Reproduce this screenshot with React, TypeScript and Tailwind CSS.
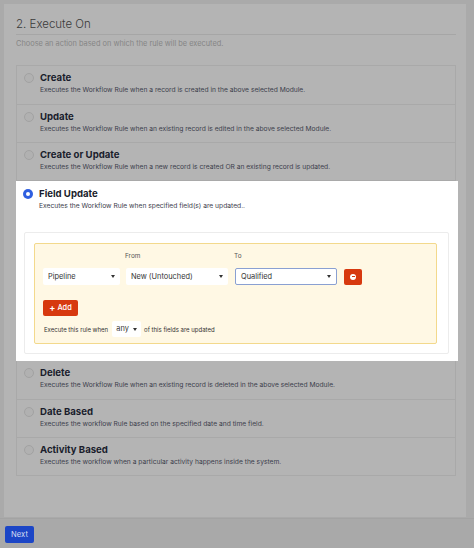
import React from 'react';

const font = { fontFamily: 'Inter, "Noto Sans", sans-serif' };

interface Option {
  title: string;
  desc: string;
}

const before: Option[] = [
  { title: 'Create', desc: 'Executes the Workflow Rule when a record is created in the above selected Module.' },
  { title: 'Update', desc: 'Executes the Workflow Rule when an existing record is edited in the above selected Module.' },
  { title: 'Create or Update', desc: 'Executes the Workflow Rule when a new record is created OR an existing record is updated.' },
];

const after: Option[] = [
  { title: 'Delete', desc: 'Executes the Workflow Rule when an existing record is deleted in the above selected Module.' },
  { title: 'Date Based', desc: 'Executes the workflow Rule based on the specified date and time field.' },
  { title: 'Activity Based', desc: 'Executes the workflow when a particular activity happens inside the system.' },
];

const Caret = () => (
  <span className="inline-block w-0 h-0 border-l-[2.5px] border-r-[2.5px] border-t-[3px] border-l-transparent border-r-transparent border-t-[#333]" />
);

const OptionRow: React.FC<{ opt: Option; first?: boolean }> = ({ opt, first }) => (
  <div className={`flex gap-[6px] pl-[7px] pt-[5px] pb-[9px] border-[#a9a9a9] ${first ? 'h-[39px]' : 'h-[38px]'} border-b`}>
    <span className="mt-[2px] w-[10px] h-[10px] rounded-full border border-[#a2a2a2] bg-[#b1b1b1] shrink-0" />
    <div className="flex flex-col">
      <span className="text-[9.6px] leading-[14px] font-bold text-[#1a1d2c]">{opt.title}</span>
      <span className="text-[6.7px] leading-[10px] text-[#3c404c] whitespace-nowrap">{opt.desc}</span>
    </div>
  </div>
);

const Select: React.FC<{ label: string; width: string; focused?: boolean }> = ({ label, width, focused }) => (
  <div
    className={`${width} h-[17px] bg-white rounded-[2px] flex items-center justify-between px-[5px] text-[7.4px] text-[#333] ${
      focused ? 'border border-[#8aa0d2]' : ''
    }`}
  >
    <span>{label}</span>
    <Caret />
  </div>
);

export default function App() {
  return (
    <div className="w-[474px] h-[548px] bg-[#aaaaaa] overflow-hidden flex flex-col" style={font}>
      <div className="mt-[4px] ml-[4px] w-[462px] h-[513px] bg-[#b4b4b4] pl-[12px] pr-[8px] pt-[12px]">
        <h2 className="text-[11.5px] leading-[16px] font-light text-[#3a3a3a] pb-[2px] border-b border-[#a6a6a6] mr-[2px]">
          2. Execute On
        </h2>
        <p className="text-[7.4px] leading-[10px] text-[#858585] mt-[4px]">
          Choose an action based on which the rule will be executed.
        </p>
        <div className="mt-[16px] w-[440px] border-t border-l border-r border-[#a9a9a9]">
          {before.map((o, i) => (
            <OptionRow key={o.title} opt={o} first={i === 0} />
          ))}
        </div>
        <div className="w-[442px] h-[180px] bg-white pt-[6px] pl-[8px] pr-[9px] pb-[7px] flex flex-col">
          <div className="flex gap-[6px]">
            <span className="mt-[2px] -ml-[1px] w-[10px] h-[10px] rounded-full bg-[#2f5fe0] flex items-center justify-center shrink-0">
              <span className="w-[4px] h-[4px] rounded-full bg-white" />
            </span>
            <div className="flex flex-col">
              <span className="text-[9.6px] leading-[14px] font-bold text-[#1a1d2c]">Field Update</span>
              <span className="text-[6.7px] leading-[10px] text-[#3c404c]">
                Executes the Workflow Rule when specified field(s) are updated..
              </span>
            </div>
          </div>
          <div className="mt-[21px] flex-1 border border-[#ececec] rounded-[2px] pt-[10px] pl-[9px] pr-[11px] pb-[9px]">
            <div className="h-full bg-[#fff8e4] border border-[#f3d98c] rounded-[2px] pl-[8px] pt-[7px]">
              <div className="flex text-[6.4px] leading-[10px] text-[#555] h-[17px]">
                <span className="w-[82px]" />
                <span className="w-[109px]">From</span>
                <span>To</span>
              </div>
              <div className="flex items-center gap-[6px]">
                <Select label="Pipeline" width="w-[77px]" />
                <Select label="New (Untouched)" width="w-[102px]" />
                <Select label="Qualified" width="w-[102px] ml-[1px]" focused />
                <button className="ml-[1px] w-[18px] h-[16px] rounded-[2px] bg-[#d7390f] flex items-center justify-center">
                  <span className="w-[6px] h-[6px] rounded-full bg-white flex items-center justify-center">
                    <span className="w-[3px] h-[1px] bg-[#d7390f]" />
                  </span>
                </button>
              </div>
              <button className="mt-[15px] w-[35px] h-[16px] rounded-[2px] bg-[#d7390f] text-white text-[7.4px] font-medium flex items-center justify-center gap-[2px]">
                <span className="text-[9px] leading-[9px] font-bold -mt-[1px]">+</span>
                <span>Add</span>
              </button>
              <div className="mt-[5px] flex items-center text-[6px] text-[#333]">
                <span className="ml-[1px]">Execute this rule when</span>
                <span className="ml-[4px] w-[29px] h-[16px] bg-white rounded-[2px] flex items-center justify-center gap-[4px] text-[7.4px]">
                  any <Caret />
                </span>
                <span className="ml-[3px]">of this fields are updated</span>
              </div>
            </div>
          </div>
        </div>
        <div className="w-[440px] border-l border-r border-[#a9a9a9]">
          {after.map((o, i) => (
            <OptionRow key={o.title} opt={o} first={i === 0} />
          ))}
        </div>
      </div>
      <div className="mt-[1px] flex-1 border-t border-[#a3a3a3] bg-[#a9a9a9] pl-[5px] pt-[7px]">
        <button className="w-[29px] h-[17px] rounded-[2px] bg-[#1c46c6] text-[7.6px] text-[#d6ddf2] flex items-center justify-center">
          Next
        </button>
      </div>
    </div>
  );
}
